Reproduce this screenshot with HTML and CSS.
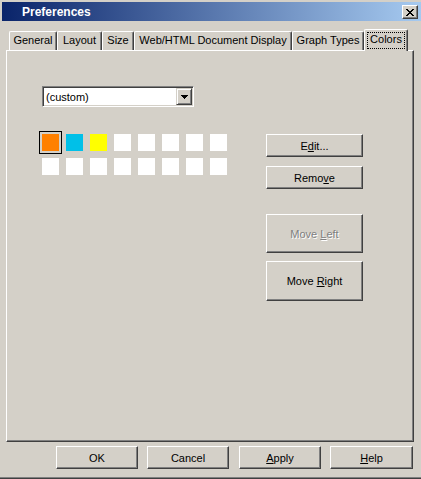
FILE: index.html
```html
<!DOCTYPE html>
<html>
<head>
<meta charset="utf-8">
<title>Preferences</title>
<link rel="stylesheet" href="styles.css">
</head>
<body>
<div class="window">
  <div class="titlebar">
    <span class="title">Preferences</span>
    <span class="close"><svg width="8" height="7" viewBox="0 0 8 7" shape-rendering="crispEdges"><path d="M0 0h2v1h1v1h2v-1h1v-1h2v1h-1v1h-1v1h-1v1h1v1h1v1h1v1h-2v-1h-1v-1h-2v1h-1v1h-2v-1h1v-1h1v-1h1v-1h-1v-1h-1v-1h-1z" fill="#000"/></svg></span>
  </div>
  <div class="client">
    <div class="tabs">
      <div class="tab tab-general">General</div>
      <div class="tab tab-layout">Layout</div>
      <div class="tab tab-size">Size</div>
      <div class="tab tab-web">Web/HTML Document Display</div>
      <div class="tab tab-graph">Graph Types</div>
      <div class="tab tab-colors active"><span class="focus">Colors</span></div>
    </div>
    <div class="panel">
      <div class="combo">
        <span class="combo-text">(custom)</span>
        <span class="combo-btn"><svg width="7" height="4" viewBox="0 0 7 4" shape-rendering="crispEdges"><path d="M0 0H7V1H6V2H5V3H4V4H3V3H2V2H1V1H0Z" fill="#000"/></svg></span>
      </div>
      <div class="editor">
        <div class="swatches">
          <div class="cell selected"><div class="sw sw-orange"></div></div>
          <div class="cell"><div class="sw sw-cyan"></div></div>
          <div class="cell"><div class="sw sw-yellow"></div></div>
          <div class="cell"><div class="sw"></div></div>
          <div class="cell"><div class="sw"></div></div>
          <div class="cell"><div class="sw"></div></div>
          <div class="cell"><div class="sw"></div></div>
          <div class="cell"><div class="sw"></div></div>
          <div class="cell"><div class="sw"></div></div>
          <div class="cell"><div class="sw"></div></div>
          <div class="cell"><div class="sw"></div></div>
          <div class="cell"><div class="sw"></div></div>
          <div class="cell"><div class="sw"></div></div>
          <div class="cell"><div class="sw"></div></div>
          <div class="cell"><div class="sw"></div></div>
          <div class="cell"><div class="sw"></div></div>
        </div>
        <div class="side">
          <button class="btn btn-edit">E<u>d</u>it...</button>
          <button class="btn btn-remove">Remo<u>v</u>e</button>
          <button class="btn btn-left" disabled>Move <u>L</u>eft</button>
          <button class="btn btn-right">Move <u>R</u>ight</button>
        </div>
      </div>
    </div>
    <div class="footer">
      <button class="btn dlg-btn">OK</button>
      <button class="btn dlg-btn">Cancel</button>
      <button class="btn dlg-btn btn-apply"><u>A</u>pply</button>
      <button class="btn dlg-btn btn-help"><u>H</u>elp</button>
    </div>
  </div>
</div>
</body>
</html>
```
FILE: styles.css
```css
html, body {
  margin: 0;
  padding: 0;
}

body {
  width: 421px;
  height: 479px;
  overflow: hidden;
  background: #d4d0c8;
  font-family: "Liberation Sans", Arial, sans-serif;
  font-size: 11px;
  color: #000;
}

.window {
  box-sizing: border-box;
  height: 479px;
  padding: 2px 0 0 2px;
  box-shadow: inset 0 -1px #404040, inset 0 -2px #808080;
}

.titlebar {
  display: flex;
  align-items: flex-start;
  height: 19px;
  background: linear-gradient(to right, #0a246a, #a6caf0);
}

.title {
  flex: 1;
  padding: 1px 0 0 20px;
  color: #fff;
  font-size: 12px;
  font-weight: bold;
  line-height: 18px;
}

.close {
  box-sizing: border-box;
  display: flex;
  align-items: center;
  justify-content: center;
  width: 16px;
  height: 14px;
  margin: 3px 3px 0 0;
  background: #d4d0c8;
  border: 1px solid;
  border-color: #fff #404040 #404040 #fff;
  box-shadow: inset -1px -1px #808080;
}

.client {
  padding: 8px 0 0 4px;
}

.tabs {
  display: flex;
  align-items: flex-start;
  height: 21px;
  padding-left: 3px;
}

.tab {
  box-sizing: border-box;
  height: 19px;
  margin-top: 2px;
  border-top: 1px solid #fff;
  border-left: 1px solid #fff;
  border-right: 1px solid #404040;
  border-radius: 2px 2px 0 0;
  box-shadow: inset -1px 0 #808080;
  text-align: center;
  line-height: 17px;
  white-space: nowrap;
}

.tab-general { width: 48px; }
.tab-layout { width: 45px; }
.tab-size { width: 32px; }
.tab-web { width: 158px; }
.tab-graph { width: 72px; }
.tab-colors { width: 44px; }

.tab.active {
  position: relative;
  z-index: 1;
  height: 22px;
  margin-top: 0;
  padding-top: 3px;
  background: #d4d0c8;
  line-height: 12px;
}

.focus {
  display: inline-block;
  vertical-align: top;
  padding: 0 2px 3px;
  outline: 1px dotted #000;
}

.panel {
  box-sizing: border-box;
  width: 408px;
  height: 392px;
  padding: 35px 0 0 35px;
  border-top: 1px solid #fff;
  border-left: 1px solid #fff;
  border-right: 1px solid #404040;
  border-bottom: 1px solid #404040;
  box-shadow: inset -1px -1px #808080;
}

.combo {
  box-sizing: border-box;
  display: flex;
  align-items: center;
  width: 152px;
  height: 21px;
  padding: 1px;
  background: #fff;
  border: 1px solid;
  border-color: #808080 #fff #fff #808080;
  box-shadow: inset 1px 1px #404040, inset -1px -1px #d4d0c8;
}

.combo-text {
  flex: 1;
  padding-left: 2px;
}

.combo-btn {
  box-sizing: border-box;
  display: flex;
  align-items: center;
  justify-content: center;
  width: 16px;
  height: 17px;
  background: #d4d0c8;
  border: 1px solid;
  border-color: #d4d0c8 #404040 #404040 #d4d0c8;
  box-shadow: inset 1px 1px #fff, inset -1px -1px #808080;
}

.editor {
  display: flex;
  align-items: flex-start;
  margin: 24px 0 0 -3px;
}

.swatches {
  display: grid;
  grid-template-columns: repeat(8, 23px);
  grid-auto-rows: 23px;
  gap: 1px;
}

.cell {
  box-sizing: border-box;
  padding: 2px;
  border: 1px solid transparent;
}

.cell.selected {
  border-color: #000;
}

.sw {
  width: 17px;
  height: 17px;
  background: #fff;
}

.sw-orange { background: #ff8000; }
.sw-cyan { background: #00c0e8; }
.sw-yellow { background: #ffff00; }

.side {
  display: flex;
  flex-direction: column;
  margin: 3px 0 0 36px;
}

.btn {
  box-sizing: border-box;
  padding: 0;
  font: inherit;
  color: #000;
  background: #d4d0c8;
  border: 1px solid;
  border-color: #fff #404040 #404040 #fff;
  border-radius: 0;
  box-shadow: inset -1px -1px #808080;
  text-align: center;
}

.btn:disabled {
  color: #808080;
  text-shadow: 1px 1px 0 #fff;
}

.side .btn {
  width: 97px;
}

.btn-edit { height: 23px; }
.btn-remove { height: 23px; margin-top: 9px; }
.btn-left { height: 39px; margin-top: 25px; }
.btn-right { height: 40px; margin-top: 8px; }

.footer {
  display: flex;
  gap: 9px;
  margin-top: 4px;
  padding-left: 50px;
}

.dlg-btn {
  width: 82px;
  height: 23px;
}

.btn-apply { margin-left: 1px; }
.btn-help { width: 83px; }
```
